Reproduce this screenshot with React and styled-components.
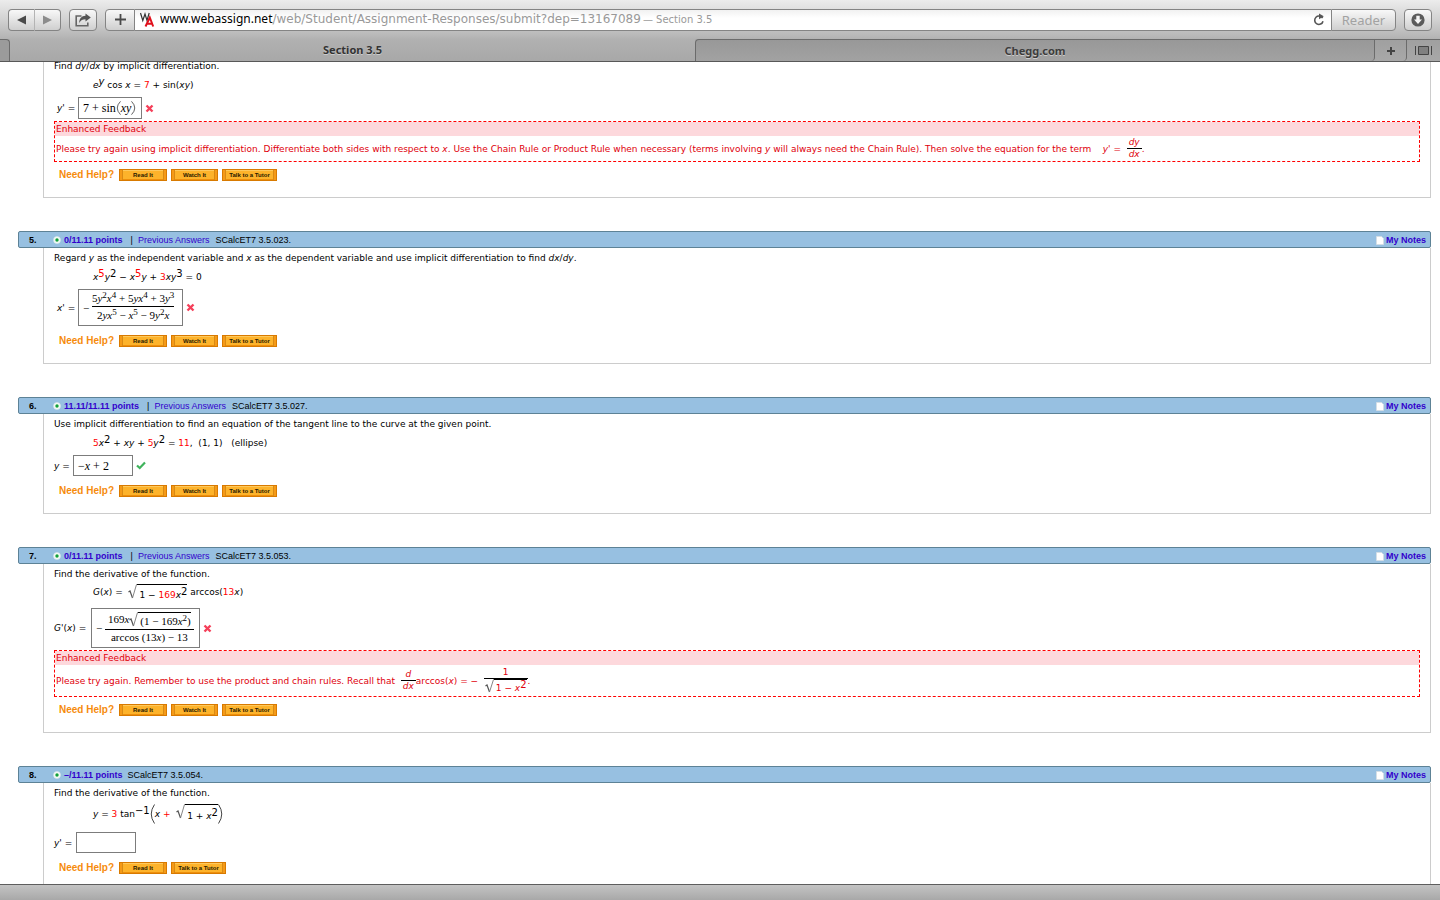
import React from 'react';
import styled, { createGlobalStyle, css } from 'styled-components';

const GlobalStyle = createGlobalStyle`
  *, *::before, *::after { box-sizing: border-box; }
  html, body, #root { height: 100%; }
  body { margin: 0; background: #fff; overflow: hidden; }
  button, input { font: inherit; margin: 0; }
`;

const uiFont = '"Noto Sans", "Open Sans", sans-serif';
const bodyFont = '"DejaVu Sans", sans-serif';
const headFont = '"Liberation Sans", sans-serif';
const mathFont = '"Liberation Serif", serif';

/* ---------- browser window ---------- */

const Window = styled.div`
  display: flex;
  flex-direction: column;
  height: 100vh;
  background: #fff;
`;

const Toolbar = styled.header`
  display: flex;
  align-items: center;
  flex: none;
  height: 39px;
  padding: 0 8px;
  gap: 8px;
  background: linear-gradient(#ececec, #d2d2d2 50%, #b2b2b2);
  font-family: ${uiFont};
`;

const chromeButton = css`
  display: flex;
  align-items: center;
  justify-content: center;
  height: 22px;
  padding: 0;
  border: 1px solid #848484;
  background: linear-gradient(#f8f8f8, #cfcfcf);
  color: #4c4c4c;
`;

const ButtonPair = styled.div`
  display: flex;
  width: 53px;
`;

const NavButton = styled.button`
  ${chromeButton}
  flex: 1;
  border-radius: ${(p) => (p.$side === 'left' ? '4px 0 0 4px' : '0 4px 4px 0')};
  ${(p) => p.$side === 'left' && 'border-right: 0;'}
  ${(p) => p.$side === 'right' && 'border-left-color: #b4b4b4;'}
`;

const ToolButton = styled.button`
  ${chromeButton}
  width: 28px;
  border-radius: 4px;
`;

const Address = styled.div`
  display: flex;
  flex: 1;
  min-width: 0;
`;

const AddButton = styled.button`
  ${chromeButton}
  width: 30px;
  border-radius: 4px 0 0 4px;
`;

const UrlField = styled.div`
  display: flex;
  align-items: center;
  flex: 1;
  min-width: 0;
  height: 22px;
  padding: 0 6px 0 5px;
  gap: 5px;
  border: solid #848484;
  border-width: 1px 0;
  background: linear-gradient(#f1f1f1, #fff 40%);
  font-family: ${bodyFont};
  font-size: 12px;
  line-height: 20px;
  color: #999;
  white-space: pre;
`;

const Url = styled.span`
  flex: 1;
  overflow: hidden;
`;

const Domain = styled.span`
  font-family: ${uiFont};
  color: #000;
`;

const PageTitle = styled.span`
  margin-left: 2px;
  font-size: 10px;
`;

const BareButton = styled.button`
  display: flex;
  padding: 0;
  border: 0;
  background: none;
`;

const ReaderButton = styled.button`
  ${chromeButton}
  width: 65px;
  border-radius: 0 4px 4px 0;
  font-size: 13px;
  line-height: 20px;
  color: #a2a2a2;
`;

const TabBar = styled.nav`
  display: flex;
  flex: none;
  height: 23px;
  border-bottom: 1px solid #585858;
  background: #aaa;
  font-family: ${uiFont};
`;

const TabStub = styled.div`
  width: 10px;
  border: solid #6b6b6b;
  border-width: 1px 1px 0 0;
  border-top-right-radius: 4px;
  background: #9b9b9b;
`;

const Tab = styled.button`
  flex: 1 1 ${(p) => (p.$active ? 7 : 2)}px;
  padding: 0;
  border: 0;
  font-size: 11px;
  font-weight: 700;
  line-height: 20px;
  text-shadow: 0 1px 0 #ccc;
  color: ${(p) => (p.$active ? '#333' : '#3c3c3c')};
  background: ${(p) => (p.$active ? 'linear-gradient(#b1b1b1, #a8a8a8)' : 'linear-gradient(#989898, #a2a2a2)')};
  ${(p) => !p.$active && `
    border: solid #6b6b6b;
    border-width: 1px 1px 0 1px;
    border-radius: 4px 0 4px 0;
  `}
`;

const TabTool = styled.button`
  display: flex;
  align-items: center;
  justify-content: center;
  width: ${(p) => p.$width}px;
  padding: 0;
  border: solid #6b6b6b;
  border-width: 1px ${(p) => (p.$last ? 0 : 1)}px 0 0;
  border-bottom-right-radius: ${(p) => (p.$last ? 0 : 4)}px;
  background: linear-gradient(#a0a0a0, #a8a8a8);
`;

const Page = styled.main`
  flex: 1;
  min-height: 0;
  overflow: hidden;
  padding: 0 9px 0 18px;
  font-family: ${bodyFont};
  font-size: 9px;
  color: #000;
`;

const StatusBar = styled.footer`
  flex: none;
  height: 16px;
  border-top: 1px solid #5e5e5e;
  background: linear-gradient(#c4c4c4, #a8a8a8);
`;

/* ---------- questions ---------- */

const Question = styled.section`
  margin-bottom: 33px;
  ${(p) => p.$scrolled && 'margin-top: -6px;'}
`;

const QuestionHeader = styled.div`
  display: flex;
  align-items: center;
  height: 17px;
  padding: 1px 4px 0 10px;
  border: 1px solid #5d8296;
  border-radius: 2px;
  background: #97c0e1;
  font-family: ${headFont};
  font-size: 9px;
  line-height: 14px;
  white-space: pre;
`;

const Number = styled.h2`
  width: 24px;
  margin: 0;
  font-size: 9px;
`;

const Points = styled.a`
  margin-left: 3px;
  font-weight: 700;
  color: #30c;
  text-decoration: none;
`;

const Divider = styled.span`
  margin: 0 5px 0 8px;
`;

const HeaderLink = styled.a`
  color: #30c;
  text-decoration: none;
`;

const Source = styled.span`
  margin-left: ${(p) => p.$gap}px;
`;

const Notes = styled.a`
  display: flex;
  align-items: center;
  gap: 2px;
  margin-left: auto;
  font-weight: 700;
  color: #30c;
  text-decoration: none;
`;

const Body = styled.div`
  margin-left: 25px;
  padding: 0 10px 16px;
  border: solid #ccc;
  border-width: 0 1px 1px;
`;

const Prompt = styled.p`
  margin: 0;
  line-height: 20px;
`;

const Equation = styled.div`
  display: flex;
  align-items: ${(p) => p.$align || 'center'};
  height: ${(p) => p.$height || 18}px;
  margin: 0 0 3px 39px;
  padding-bottom: ${(p) => p.$bottom || 0}px;
  line-height: 16px;
  white-space: pre;
`;

const AnswerRow = styled.div`
  display: flex;
  align-items: center;
  gap: 3px;
  padding-left: ${(p) => (p.$inset ? 3 : 0)}px;
  white-space: pre;
`;

const AnswerLabel = styled.label`
  width: ${(p) => p.$width}px;
  margin-right: -3px;
`;

const AnswerBox = styled.output`
  display: flex;
  align-items: center;
  width: ${(p) => p.$width}px;
  height: ${(p) => p.$height}px;
  padding: 0 4px;
  border: 1px solid #7c7c7c;
  font-family: ${mathFont};
  font-size: ${(p) => (p.$large ? 12 : 11)}px;
  line-height: 12px;
`;

const AnswerInput = styled.input`
  width: 60px;
  height: 21px;
  padding: 0 4px;
  border: 1px solid #7c7c7c;
  background: #fff;
  font-family: ${mathFont};
  font-size: 12px;
`;

const Feedback = styled.section`
  height: ${(p) => p.$height}px;
  margin: 2px 0 -2px;
  border: 1px dashed #f00;
  color: #e0000c;
`;

const FeedbackTitle = styled.h3`
  margin: 0;
  padding-left: 1px;
  background: #fdd8dc;
  font-size: 9px;
  font-weight: 400;
  line-height: 14px;
`;

const FeedbackText = styled.div`
  display: flex;
  align-items: center;
  height: ${(p) => p.$height}px;
  padding-left: 1px;
  line-height: 12px;
  white-space: pre;
`;

const Help = styled.div`
  display: flex;
  align-items: center;
  gap: 4px;
  height: 12px;
  margin: 9px 0 0 5px;
`;

const HelpLabel = styled.span`
  width: 56px;
  font-family: ${headFont};
  font-size: 10px;
  font-weight: 700;
  line-height: 12px;
  color: #f68b0c;
`;

const HelpButton = styled.button`
  width: ${(p) => p.$width}px;
  height: 12px;
  padding: 1px 0 0;
  border: solid #d87a00;
  border-width: 1px;
  background: #fdb32b;
  box-shadow: inset 2px 0 0 #f59a17, inset -2px 0 0 #f59a17, inset 3px 0 0 #d98a14, inset -3px 0 0 #d98a14, inset 0 1px 0 #ffc95c, inset 0 -1px 0 #ee8f0c;
  font-family: ${headFont};
  font-size: 6px;
  font-weight: 700;
  line-height: 9px;
  color: #2a1a00;
`;

/* ---------- math ---------- */

const Red = styled.span`
  color: #f00;
`;

const Sup = styled.span`
  font-size: ${(p) => (p.$small ? 9 : 10)}px;
  line-height: 0;
  vertical-align: ${(p) => (p.$small ? 4 : 3)}px;
`;

const Frac = styled.span`
  display: inline-flex;
  flex-direction: column;
  align-items: center;
`;

const Over = styled.span`
  align-self: stretch;
  border-bottom: 1px solid #000;
  line-height: ${(p) => p.$line || 11}px;
  text-align: center;
`;

const Under = styled.span`
  padding: 0 ${(p) => p.$pad || 0}px;
  line-height: ${(p) => p.$line || 11}px;
`;

const RootWrap = styled.span`
  display: inline-flex;
  vertical-align: middle;
`;

const Radicand = styled.span`
  padding: ${(p) => p.$drop}px 0 0 2px;
  border-top: 1px solid #000;
`;

const Root = ({ height = 15, drop = 2, children }) => (
  <RootWrap>
    <svg width="9" height={height} viewBox={`0 0 9 ${height}`} fill="none" aria-hidden="true">
      <path d={`M0.5 ${height - 7}L2 ${height - 8}L4.5 ${height - 1}`} stroke="#555" strokeWidth="1.2" />
      <path d={`M4.5 ${height - 1}L8.5 0.5H9`} stroke="#777" strokeWidth="0.9" />
    </svg>
    <Radicand $drop={drop}>{children}</Radicand>
  </RootWrap>
);

const Paren = ({ flip, height = 20, color = '#444' }) => (
  <svg width="5" height={height} viewBox="0 0 5 20" preserveAspectRatio="none" fill="none" aria-hidden="true">
    <path d={flip ? 'M0.5 0.5Q7 10 0.5 19.5' : 'M4.5 0.5Q-2 10 4.5 19.5'} stroke={color} />
  </svg>
);

/* ---------- icons ---------- */

const Cross = () => (
  <svg width="9" height="9" viewBox="0 0 9 9" role="img" aria-label="incorrect">
    <path d="M1.5 1.5L7.5 7.5M7.5 1.5L1.5 7.5" stroke="#f5405a" strokeWidth="2.4" />
  </svg>
);

const Check = () => (
  <svg width="10" height="9" viewBox="0 0 10 9" role="img" aria-label="correct">
    <path d="M1 4.5L3.7 7L9 1.5" stroke="#3fb35c" strokeWidth="2.2" fill="none" />
  </svg>
);

const Dot = () => (
  <svg width="8" height="8" viewBox="0 0 8 8" aria-hidden="true">
    <circle cx="4" cy="4" r="3.5" fill="#f6fbf6" stroke="#d5e6ea" strokeWidth="0.6" />
    <circle cx="4" cy="4" r="1.7" fill="#12a03a" />
  </svg>
);

const Note = () => (
  <svg width="8" height="9" viewBox="0 0 8 9" aria-hidden="true">
    <path d="M0.5 0.5H5.5L7.5 2.5V8.5H0.5Z" fill="#fff" stroke="#d5dde2" strokeWidth="0.8" />
  </svg>
);

/* ---------- question parts ---------- */

const Header = ({ number, points, previous, source }) => (
  <QuestionHeader>
    <Number>{number}.</Number>
    <Dot />
    <Points href="#points">{points} points</Points>
    {previous && (
      <>
        <Divider>|</Divider>
        <HeaderLink href="#previous">Previous Answers</HeaderLink>
      </>
    )}
    <Source $gap={previous ? 6 : 5}>{source}</Source>
    <Notes href="#notes"><Note />My Notes</Notes>
  </QuestionHeader>
);

const NeedHelp = ({ watch = true }) => (
  <Help>
    <HelpLabel>Need Help?</HelpLabel>
    <HelpButton type="button" $width={48}>Read It</HelpButton>
    {watch && <HelpButton type="button" $width={47}>Watch It</HelpButton>}
    <HelpButton type="button" $width={55}>Talk to a Tutor</HelpButton>
  </Help>
);

export default function App() {
  return (
    <Window>
      <GlobalStyle />
      <Toolbar>
        <ButtonPair>
          <NavButton type="button" $side="left" aria-label="Back">
            <svg width="9" height="10" viewBox="0 0 9 10"><path d="M0 5L9 0.5V9.5Z" fill="#4a4a4a" /></svg>
          </NavButton>
          <NavButton type="button" $side="right" aria-label="Forward">
            <svg width="9" height="10" viewBox="0 0 9 10"><path d="M9 5L0 0.5V9.5Z" fill="#8c8c8c" /></svg>
          </NavButton>
        </ButtonPair>
        <ToolButton type="button" aria-label="Share">
          <svg width="16" height="14" viewBox="0 0 16 14" fill="none">
            <path d="M6.5 3H1.2V12.8H12.8V9.5" stroke="#666" strokeWidth="1.6" />
            <path d="M10.5 0.5L15.8 4.5L10.5 8.5V6.2C7.6 6.2 5.8 7 4.2 10C4.2 5.6 6.6 2.9 10.5 2.8Z" fill="#555" />
          </svg>
        </ToolButton>
        <Address>
          <AddButton type="button" aria-label="Add bookmark">
            <svg width="11" height="11" viewBox="0 0 11 11"><path d="M5.5 0V11M0 5.5H11" stroke="#4a4a4a" strokeWidth="1.8" /></svg>
          </AddButton>
          <UrlField>
            <svg width="15" height="16" viewBox="0 0 15 16" fill="none" aria-hidden="true">
              <path d="M0.5 1L2.8 8.5L5 2L7 8.5L9.2 1" stroke="#333" strokeWidth="1.2" />
              <path d="M5.5 14.5L9.8 5.5L13.2 14.5M7.5 11.8H12" stroke="#e0101c" strokeWidth="2" />
            </svg>
            <Url>
              <Domain>www.webassign.net</Domain>/web/Student/Assignment-Responses/submit?dep=13167089
              <PageTitle>— Section 3.5</PageTitle>
            </Url>
            <BareButton type="button" aria-label="Reload">
              <svg width="12" height="13" viewBox="0 0 12 13" fill="none">
                <path d="M9.6 5.2A4.2 4.2 0 1 0 10 8.2" stroke="#555" strokeWidth="1.6" />
                <path d="M6 0.5L10.8 3.2L6 6.2Z" fill="#555" />
              </svg>
            </BareButton>
          </UrlField>
          <ReaderButton type="button">Reader</ReaderButton>
        </Address>
        <ToolButton type="button" aria-label="Downloads">
          <svg width="14" height="14" viewBox="0 0 14 14">
            <circle cx="7" cy="7" r="6.6" fill="#5a5a5a" />
            <path d="M5.3 2.8H8.7V6.6H11L7 11L3 6.6H5.3Z" fill="#f4f4f4" />
          </svg>
        </ToolButton>
      </Toolbar>

      <TabBar>
        <TabStub />
        <Tab type="button" $active>Section 3.5</Tab>
        <Tab type="button">Chegg.com</Tab>
        <TabTool type="button" $width={32} aria-label="New tab">
          <svg width="8" height="8" viewBox="0 0 8 8"><path d="M4 0V8M0 4H8" stroke="#444" strokeWidth="2" /></svg>
        </TabTool>
        <TabTool type="button" $width={33} $last aria-label="Show all tabs">
          <svg width="17" height="9" viewBox="0 0 17 9" fill="none" stroke="#444">
            <path d="M0.5 0V9M16.5 0V9" />
            <path d="M3.5 0.5H13.5V8.5H3.5Z" fill="#808080" />
          </svg>
        </TabTool>
      </TabBar>

      <Page>
        <Question $scrolled>
          <Body>
            <Prompt>Find <i>dy</i>/<i>dx</i> by implicit differentiation.</Prompt>
            <Equation>
              <span><i>e</i><Sup><i>y</i></Sup> cos <i>x</i> = <Red>7</Red> + sin(<i>xy</i>)</span>
            </Equation>
            <AnswerRow $inset>
              <AnswerLabel htmlFor="a4" $width={21}><i>y'</i> =</AnswerLabel>
              <AnswerBox id="a4" $width={64} $height={22} $large>
                <span>7 + sin</span><Paren height={14} /><i>xy</i><Paren flip height={14} />
              </AnswerBox>
              <Cross />
            </AnswerRow>
            <Feedback $height={41}>
              <FeedbackTitle>Enhanced Feedback</FeedbackTitle>
              <FeedbackText $height={25}>
                <span>Please try again using implicit differentiation. Differentiate both sides with respect to <i>x</i>. Use the Chain Rule or Product Rule when necessary (terms involving <i>y</i> will always need the Chain Rule). Then solve the equation for the term    <i>y'</i> =  </span>
                <Frac><Over><i>dy</i></Over><Under $pad={2}><i>dx</i></Under></Frac>
                <span>.</span>
              </FeedbackText>
            </Feedback>
            <NeedHelp />
          </Body>
        </Question>

        <Question>
          <Header number={5} points="0/11.11" previous source="SCalcET7 3.5.023." />
          <Body>
            <Prompt>
              Regard <i>y</i> as the independent variable and <i>x</i> as the dependent variable and use implicit differentiation to find <i>dx</i>/<i>dy</i>.
            </Prompt>
            <Equation>
              <span>
                <i>x</i><Sup><Red>5</Red></Sup><i>y</i><Sup>2</Sup> − <i>x</i><Sup><Red>5</Red></Sup><i>y</i> + <Red>3</Red><i>xy</i><Sup>3</Sup> = 0
              </span>
            </Equation>
            <AnswerRow $inset>
              <AnswerLabel htmlFor="a5" $width={21}><i>x'</i> =</AnswerLabel>
              <AnswerBox id="a5" $width={105} $height={37}>
                <span>− </span>
                <Frac>
                  <Over $line={15}>
                    5<i>y</i><Sup $small>2</Sup><i>x</i><Sup $small>4</Sup> + 5<i>yx</i><Sup $small>4</Sup> + 3<i>y</i><Sup $small>3</Sup>
                  </Over>
                  <Under $line={17} $pad={5}>
                    2<i>yx</i><Sup $small>5</Sup> − <i>x</i><Sup $small>5</Sup> − 9<i>y</i><Sup $small>2</Sup><i>x</i>
                  </Under>
                </Frac>
              </AnswerBox>
              <Cross />
            </AnswerRow>
            <NeedHelp />
          </Body>
        </Question>

        <Question>
          <Header number={6} points="11.11/11.11" previous source="SCalcET7 3.5.027." />
          <Body>
            <Prompt>Use implicit differentiation to find an equation of the tangent line to the curve at the given point.</Prompt>
            <Equation>
              <span>
                <Red>5</Red><i>x</i><Sup>2</Sup> + <i>xy</i> + <Red>5</Red><i>y</i><Sup>2</Sup> = <Red>11</Red>,  (1, 1)   (ellipse)
              </span>
            </Equation>
            <AnswerRow>
              <AnswerLabel htmlFor="a6" $width={19}><i>y</i> =</AnswerLabel>
              <AnswerBox id="a6" $width={60} $height={21} $large>
                <span>−<i>x</i> + 2</span>
              </AnswerBox>
              <Check />
            </AnswerRow>
            <NeedHelp />
          </Body>
        </Question>

        <Question>
          <Header number={7} points="0/11.11" previous source="SCalcET7 3.5.053." />
          <Body>
            <Prompt>Find the derivative of the function.</Prompt>
            <Equation $height={21} $align="flex-start">
              <span><i>G</i>(<i>x</i>) =  </span>
              <Root>1 − <Red>169</Red><i>x</i><Sup>2</Sup></Root>
              <span> arccos(<Red>13</Red><i>x</i>)</span>
            </Equation>
            <AnswerRow>
              <AnswerLabel htmlFor="a7" $width={37}><i>G'</i>(<i>x</i>) =</AnswerLabel>
              <AnswerBox id="a7" $width={109} $height={40}>
                <span>− </span>
                <Frac>
                  <Over $line={15}>
                    169<i>x</i>
                    <Root height={15} drop={1}>
                      (1 − 169<i>x</i><Sup $small>2</Sup>)
                    </Root>
                  </Over>
                  <Under $line={15} $pad={6}>arccos (13<i>x</i>) − 13</Under>
                </Frac>
              </AnswerBox>
              <Cross />
            </AnswerRow>
            <Feedback $height={47}>
              <FeedbackTitle>Enhanced Feedback</FeedbackTitle>
              <FeedbackText $height={31}>
                <span>Please try again. Remember to use the product and chain rules. Recall that  </span>
                <Frac><Over><i>d</i></Over><Under $pad={2}><i>dx</i></Under></Frac>
                <span>arccos(<i>x</i>) = −  </span>
                <Frac>
                  <Over>1</Over>
                  <Under $pad={1}><Root height={14} drop={3}>1 − <i>x</i><Sup>2</Sup></Root></Under>
                </Frac>
                <span>.</span>
              </FeedbackText>
            </Feedback>
            <NeedHelp />
          </Body>
        </Question>

        <Question>
          <Header number={8} points="–/11.11" source="SCalcET7 3.5.054." />
          <Body>
            <Prompt>Find the derivative of the function.</Prompt>
            <Equation $height={26} $bottom={4}>
              <span><i>y</i> = <Red>3</Red> tan<Sup>−1</Sup></span>
              <Paren />
              <span><i>x</i> <Red>+</Red>  </span>
              <Root drop={3}>1 + <i>x</i><Sup>2</Sup></Root>
              <Paren flip />
            </Equation>
            <AnswerRow>
              <AnswerLabel htmlFor="a8" $width={22}><i>y'</i> =</AnswerLabel>
              <AnswerInput id="a8" type="text" />
            </AnswerRow>
            <NeedHelp watch={false} />
          </Body>
        </Question>
      </Page>
      <StatusBar />
    </Window>
  );
}
